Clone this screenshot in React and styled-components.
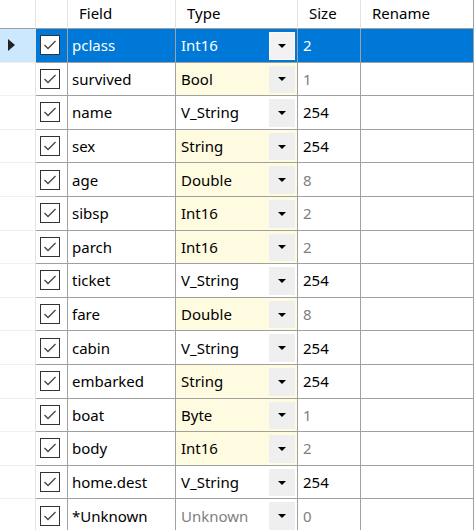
import React from "react";
import styled, { createGlobalStyle, css } from "styled-components";

const Global = createGlobalStyle`
  html, body { margin: 0; padding: 0; background: #fff; }
  body { font-family: "Noto Sans", "Open Sans", sans-serif; font-size: 15px; color: #000; overflow: hidden; }
`;

const COLS = "36px 32px 108px 122px 63px 113px";

const Grid = styled.div`
  display: grid;
  grid-template-columns: ${COLS};
  grid-template-rows: 29px;
  grid-auto-rows: 33.6px;
  width: 474px;
  height: 530px;
  overflow: hidden;
  background: #fff;
`;

const HeadCell = styled.div`
  box-sizing: border-box;
  display: flex;
  align-items: center;
  padding-left: ${(p) => (p.$pad ? "11px" : "0")};
  padding-bottom: 2px;
  border-right: 1px solid ${(p) => (p.$last ? "#a0a0a0" : "#e3e3e3")};
  border-bottom: 1px solid #a0a0a0;
  background: #fff;
  color: #000;
  white-space: nowrap;
`;

const RowHead = styled.div`
  box-sizing: border-box;
  display: flex;
  align-items: center;
  padding-left: 8px;
  border-right: 1px solid #e3e3e3;
  border-bottom: 1px solid #f0f0f0;
  background: ${(p) => (p.$sel ? "#cce8ff" : "#fff")};
`;

const Cell = styled.div`
  box-sizing: border-box;
  position: relative;
  display: flex;
  align-items: center;
  padding-left: ${(p) => p.$pl ?? 4}px;
  border-right: 1px solid #a0a0a0;
  border-bottom: 1px solid #a0a0a0;
  white-space: nowrap;
  overflow: hidden;
  background: ${(p) => (p.$sel ? "#0078d7" : p.$bg || "#fff")};
  color: ${(p) => (p.$sel ? "#fff" : p.$grey ? "#808080" : "#000")};
`;

const Box = styled.div`
  box-sizing: border-box;
  width: 20px;
  height: 20px;
  border: 1.5px solid #333;
  background: #fff;
  display: flex;
  align-items: center;
  justify-content: center;
  margin-left: 4px;
`;

const DropBtn = styled.div`
  position: absolute;
  right: 2px;
  top: 3px;
  bottom: 2px;
  width: 26px;
  box-sizing: border-box;
  background: ${(p) => (p.$sel ? "#f2f2f2" : "#efefef")};
  ${(p) => p.$sel && css`border: 1px solid #fafafa;`}
  display: flex;
  align-items: center;
  justify-content: center;
`;

const Arrow = styled.div`
  width: 0;
  height: 0;
  border-left: 4px solid transparent;
  border-right: 4px solid transparent;
  border-top: 4px solid #000;
`;

const RowArrow = styled.div`
  width: 0;
  height: 0;
  border-top: 6px solid transparent;
  border-bottom: 6px solid transparent;
  border-left: 7px solid #222;
`;

const rows = [
  ["pclass", "Int16", "2", true, true],
  ["survived", "Bool", "1", true, false],
  ["name", "V_String", "254", false, false],
  ["sex", "String", "254", true, false],
  ["age", "Double", "8", true, false],
  ["sibsp", "Int16", "2", true, false],
  ["parch", "Int16", "2", true, false],
  ["ticket", "V_String", "254", false, false],
  ["fare", "Double", "8", true, false],
  ["cabin", "V_String", "254", false, false],
  ["embarked", "String", "254", true, false],
  ["boat", "Byte", "1", true, false],
  ["body", "Int16", "2", true, false],
  ["home.dest", "V_String", "254", false, false],
  ["*Unknown", "Unknown", "0", false, false],
];

const fixed = ["Int16", "Bool", "Double", "Byte", "Unknown"];

function Check() {
  return (
    <Box>
      <svg width="14" height="12" viewBox="0 0 14 12">
        <path d="M1.5 6 L5 9.5 L12.5 2" fill="none" stroke="#444" strokeWidth="1.3" />
      </svg>
    </Box>
  );
}

export default function App() {
  return (
    <>
      <Global />
      <Grid>
        <HeadCell />
        <HeadCell />
        <HeadCell $pad>Field</HeadCell>
        <HeadCell $pad>Type</HeadCell>
        <HeadCell $pad>Size</HeadCell>
        <HeadCell $pad $last>Rename</HeadCell>
        {rows.map(([field, type, size, yellow, sel]) => {
          const unknown = type === "Unknown";
          return (
            <React.Fragment key={field}>
              <RowHead $sel={sel}>{sel && <RowArrow />}</RowHead>
              <Cell $sel={sel} $pl={0}>
                <Check />
              </Cell>
              <Cell $sel={sel} $pl={4}>{field}</Cell>
              <Cell $sel={sel} $pl={5} $bg={yellow ? "#fffbe0" : "#fff"} $grey={unknown}>
                {type}
                <DropBtn $sel={sel}>
                  <Arrow />
                </DropBtn>
              </Cell>
              <Cell $sel={sel} $pl={5} $grey={fixed.includes(type)}>{size}</Cell>
              <Cell $sel={sel} />
            </React.Fragment>
          );
        })}
      </Grid>
    </>
  );
}
